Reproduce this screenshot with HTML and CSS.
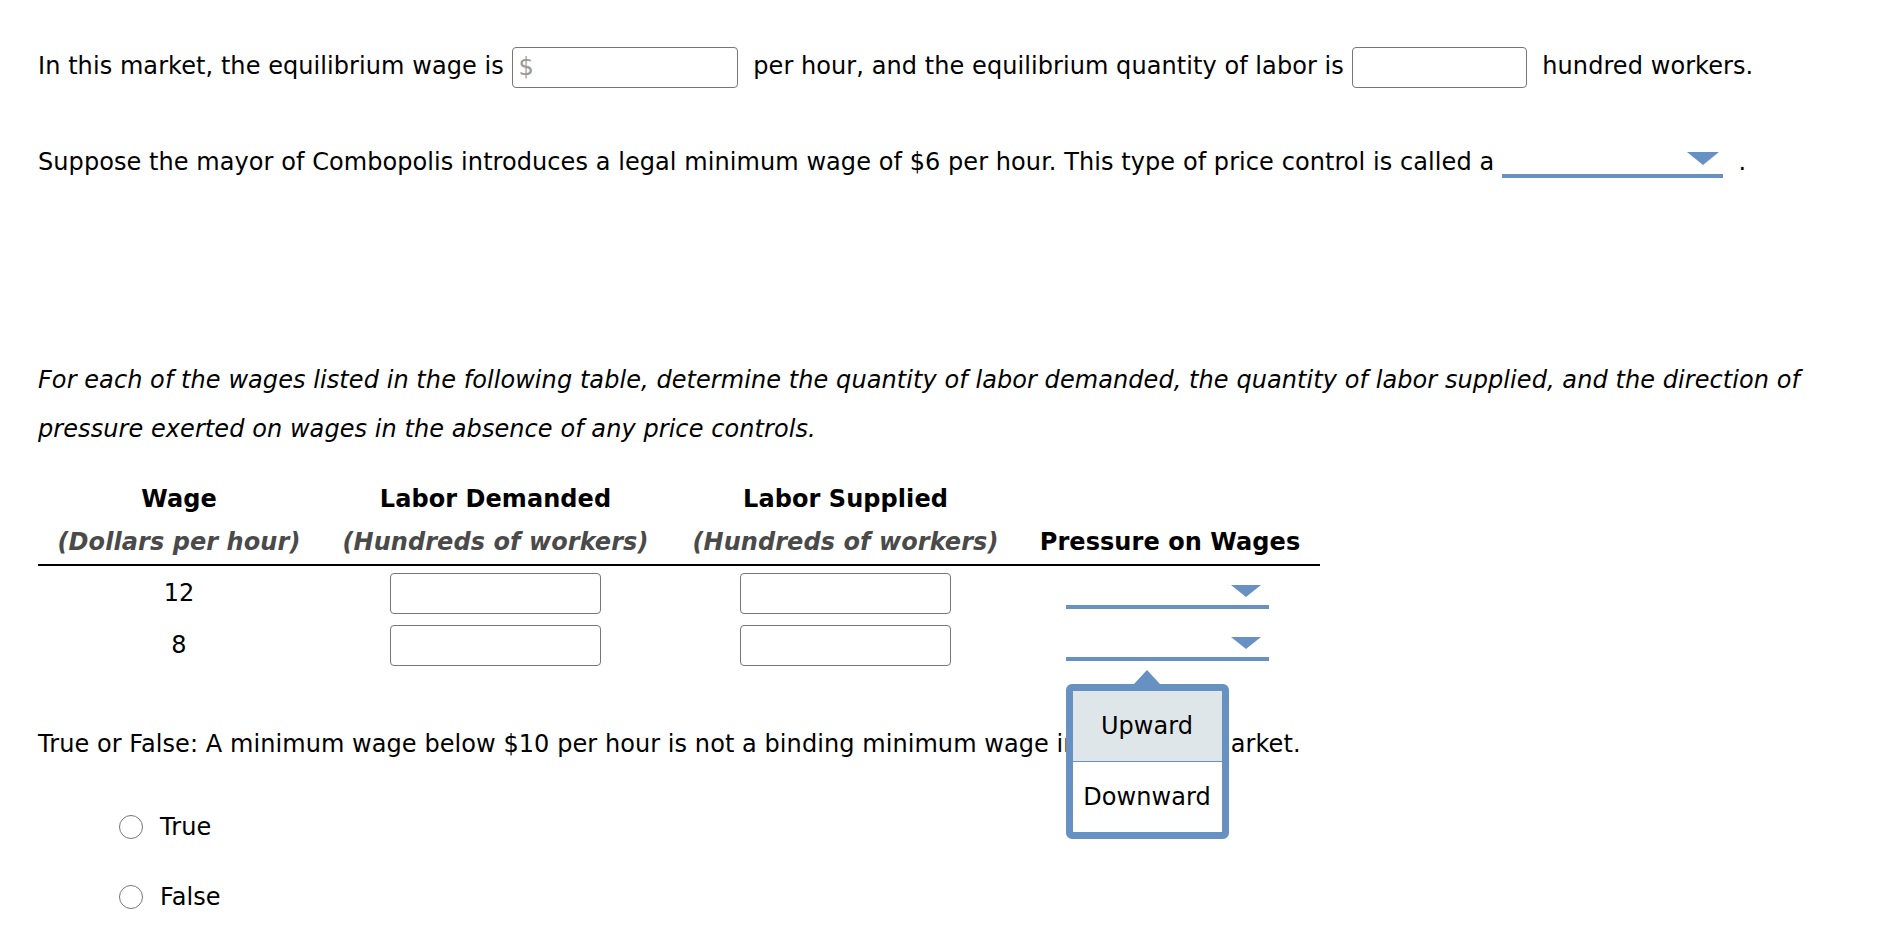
FILE: index.html
```html
<!DOCTYPE html>
<html lang="en">
<head>
  <meta charset="UTF-8" />
  <title>Minimum Wage - Combopolis</title>
  <link rel="stylesheet" href="styles.css">
</head>
<body>

  <main class="problem">

    <!-- Equilibrium -->
    <p class="line first">
      In this market, the equilibrium wage is
      <span class="field money"><span class="prefix">$</span><input type="text" /></span>
      per hour, and the equilibrium quantity of labor is
      <input type="text" class="field qty" />
      hundred workers.
    </p>

    <p class="line second">
      Suppose the mayor of Combopolis introduces a legal minimum wage of $6 per hour. This type of price control is called a
      <span class="dropdown wide"><span class="caret"></span></span> .
    </p>

    <!-- Wage table -->
    <p class="instructions">
      For each of the wages listed in the following table, determine the quantity of labor demanded, the quantity of labor supplied, and the direction of pressure exerted on wages in the absence of any price controls.
    </p>

    <table class="wage-table">
      <colgroup>
        <col class="c-wage">
        <col class="c-demand">
        <col class="c-supply">
        <col class="c-pressure">
      </colgroup>
      <thead>
        <tr>
          <th>Wage</th>
          <th>Labor Demanded</th>
          <th>Labor Supplied</th>
          <th></th>
        </tr>
        <tr class="units">
          <th><em>(Dollars per hour)</em></th>
          <th><em>(Hundreds of workers)</em></th>
          <th><em>(Hundreds of workers)</em></th>
          <th>Pressure on Wages</th>
        </tr>
      </thead>
      <tbody>
        <tr>
          <td>12</td>
          <td><input type="text" class="field cell" /></td>
          <td><input type="text" class="field cell" /></td>
          <td><span class="dropdown"><span class="caret"></span></span></td>
        </tr>
        <tr>
          <td>8</td>
          <td><input type="text" class="field cell" /></td>
          <td><input type="text" class="field cell" /></td>
          <td>
            <span class="dropdown open">
              <span class="caret"></span>
              <ul class="menu">
                <li class="selected">Upward</li>
                <li>Downward</li>
              </ul>
            </span>
          </td>
        </tr>
      </tbody>
    </table>

    <!-- True / False -->
    <p class="line tf">True or False: A minimum wage below $10 per hour is not a binding minimum wage in this labor market.</p>

    <ul class="choices">
      <li><input type="radio" name="tf" id="tf-true" /><label for="tf-true">True</label></li>
      <li><input type="radio" name="tf" id="tf-false" /><label for="tf-false">False</label></li>
    </ul>

  </main>

</body>
</html>
```

FILE: styles.css
```css
/* Global Styles */
body {
  font-family: 'DejaVu Sans', Verdana, sans-serif;
  font-size: 24px;
  letter-spacing: 0.07px;
  color: #000;
  margin: 0;
  padding: 0;
  background-color: #fff;
}

.problem {
  padding: 0 38px;
}

p {
  margin: 0;
}

.line {
  line-height: 48px;
}

.line.first {
  margin-top: 42px;
}

.line.second {
  margin-top: 48px;
}

/* Inputs */
.field {
  box-sizing: border-box;
  height: 41px;
  border: 1px solid #767676;
  border-radius: 4px;
  background: #fff;
  vertical-align: middle;
  font: inherit;
  padding: 0 6px;
  margin-right: 8px;
}

.field.money {
  display: inline-flex;
  align-items: center;
  width: 226px;
}

.field.money .prefix {
  color: #9a9a9a;
}

.field.money input {
  flex: 1;
  min-width: 0;
  border: none;
  outline: none;
  font: inherit;
  background: transparent;
}

.field.qty {
  width: 175px;
}

.field.cell {
  width: 211px;
  margin: 0;
}

/* Dropdowns */
.dropdown {
  position: relative;
  display: inline-flex;
  justify-content: flex-end;
  align-items: center;
  box-sizing: border-box;
  width: 203px;
  height: 32px;
  border-bottom: 4px solid #6891c3;
  vertical-align: middle;
  margin-right: 8px;
}

.dropdown.wide {
  width: 221px;
  height: 36px;
  margin-top: -6px;
}

.caret {
  width: 0;
  height: 0;
  margin-right: 8px;
  border-left: 15px solid transparent;
  border-right: 15px solid transparent;
  border-top: 12px solid #6891c3;
}

.dropdown.wide .caret {
  border-left-width: 16px;
  border-right-width: 16px;
  border-top-width: 13px;
  margin-right: 4px;
}

/* Open option list */
.menu {
  position: absolute;
  top: calc(100% + 27px);
  left: 0;
  z-index: 2;
  width: 163px;
  box-sizing: border-box;
  margin: 0;
  padding: 0;
  list-style: none;
  background: #fff;
  border: 7px solid #6891c3;
  border-radius: 6px;
}

.menu::before {
  content: '';
  position: absolute;
  top: -21px;
  left: 50%;
  margin-left: -13px;
  border-left: 13px solid transparent;
  border-right: 13px solid transparent;
  border-bottom: 14px solid #6891c3;
}

.menu li {
  height: 70px;
  line-height: 70px;
  text-align: center;
}

.menu li + li {
  border-top: 1px solid #6891c3;
}

.menu li.selected {
  background-color: #dfe6e9;
}

/* Wage table */
.instructions {
  margin-top: 170px;
  font-style: italic;
  line-height: 49px;
}

.wage-table {
  margin-top: 24px;
  table-layout: fixed;
  width: 1282px;
  border-collapse: collapse;
}

.c-wage { width: 282px; }
.c-demand { width: 351px; }
.c-supply { width: 349px; }
.c-pressure { width: 300px; }

.wage-table th {
  font-weight: bold;
  line-height: 43px;
  padding: 0;
  white-space: nowrap;
  text-align: center;
}

.wage-table th em {
  color: #4a4a4a;
}

.wage-table .units th {
  border-bottom: 2px solid #000;
}

.wage-table td {
  height: 52px;
  padding: 0;
  text-align: center;
  vertical-align: middle;
}

.wage-table tbody tr:first-child td {
  padding-top: 1px;
}

.wage-table td .dropdown {
  margin: 0 0 0 -6px;
}

/* True / False */
.tf {
  margin-top: 49px;
}

.choices {
  list-style: none;
  margin: 35px 0 0 81px;
  padding: 0;
  display: flex;
  flex-direction: column;
  gap: 22px;
}

.choices li {
  display: flex;
  align-items: center;
  gap: 17px;
  line-height: 48px;
}

.choices input {
  appearance: none;
  width: 24px;
  height: 24px;
  margin: 0;
  border: 1px solid #767676;
  border-radius: 50%;
  background: #fff;
}
```
